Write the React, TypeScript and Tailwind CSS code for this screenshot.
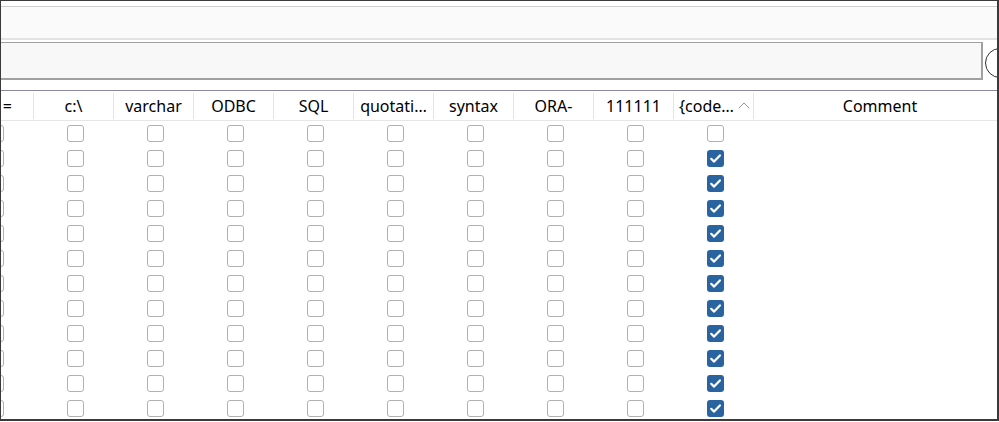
import React from "react";

const cols = [
  "=",
  "c:\\",
  "varchar",
  "ODBC",
  "SQL",
  "quotati…",
  "syntax",
  "ORA-",
  "111111",
  "{code…",
];

const ROWS = 12;

function Box({ checked }: { checked: boolean }) {
  if (checked) {
    return (
      <div className="w-[17px] h-[17px] rounded-[3px] bg-[#2a64a0] flex items-center justify-center">
        <svg width="17" height="17" viewBox="0 0 17 17">
          <path d="M4.2 8.8 L7.1 11.6 L12.9 5.4" fill="none" stroke="#ffffff" strokeWidth="2.2" strokeLinecap="round" strokeLinejoin="round" />
        </svg>
      </div>
    );
  }
  return <div className="w-[17px] h-[17px] rounded-[3px] border-[1.5px] border-[#b0b0b0] bg-white" />;
}

export default function App() {
  return (
    <div className="w-[999px] h-[422px] bg-white" style={{ fontFamily: '"Noto Sans", "Open Sans", sans-serif' }}>
      <div className="w-[999px] h-[421px] border-t border-l border-r-2 border-b-2 border-[#3a3a3a] flex flex-col overflow-hidden">
        <div className="h-[5px] shrink-0" />
        <div className="h-[34px] shrink-0 border-t border-[#cfcfcf] border-b-2 border-b-[#e2e2e2] bg-[#fafafa]" />
        <div className="h-[2px] shrink-0" />
        <div className="h-[38px] shrink-0 flex items-start">
          <div className="w-[982px] h-[38px] shrink-0 border-t border-r-2 border-b-2 border-[#a0a0a0] bg-[#f8f8f8]" />
          <div className="ml-[2px] mt-[6px] w-[30px] h-[30px] shrink-0 rounded-full border-[1.5px] border-[#2e2e2e]" />
        </div>
        <div className="h-[10px] shrink-0" />
        <div className="border-t border-[#8a8a9c] flex-1 overflow-hidden">
          <div className="ml-[-47px] flex h-[30px] border-b border-[#e6e6e6] w-max text-[16px] text-black">
            {cols.map((c, i) => (
              <div key={i} className="w-[80px] shrink-0 flex">
                {i === 0 ? (
                  <div className="flex-1 flex items-center justify-end pr-[21px]">{c}</div>
                ) : i === 9 ? (
                  <div className="flex-1 flex items-center pl-[5px] pr-[3px] overflow-hidden whitespace-nowrap">
                    <span className="flex-1">{c}</span>
                    <svg width="12" height="7" viewBox="0 0 12 7" className="shrink-0">
                      <path d="M0.8 6.2 L6 1 L11.2 6.2" fill="none" stroke="#9a9a9a" strokeWidth="1" />
                    </svg>
                  </div>
                ) : (
                  <div className="flex-1 flex items-center justify-center whitespace-nowrap">{c}</div>
                )}
                <div className="w-px mt-[2px] mb-[1px] bg-[#e4e4e4]" />
              </div>
            ))}
            <div className="w-[252px] shrink-0 flex items-center justify-center">Comment</div>
          </div>
          {Array.from({ length: ROWS }).map((_, r) => (
            <div key={r} className="ml-[-47px] flex h-[25px] w-max">
              {cols.map((_, i) => (
                <div key={i} className="w-[80px] shrink-0 flex justify-center pt-[4px] pl-[3px]">
                  <Box checked={i === 9 && r > 0} />
                </div>
              ))}
              <div className="w-[252px] shrink-0" />
            </div>
          ))}
        </div>
      </div>
    </div>
  );
}
